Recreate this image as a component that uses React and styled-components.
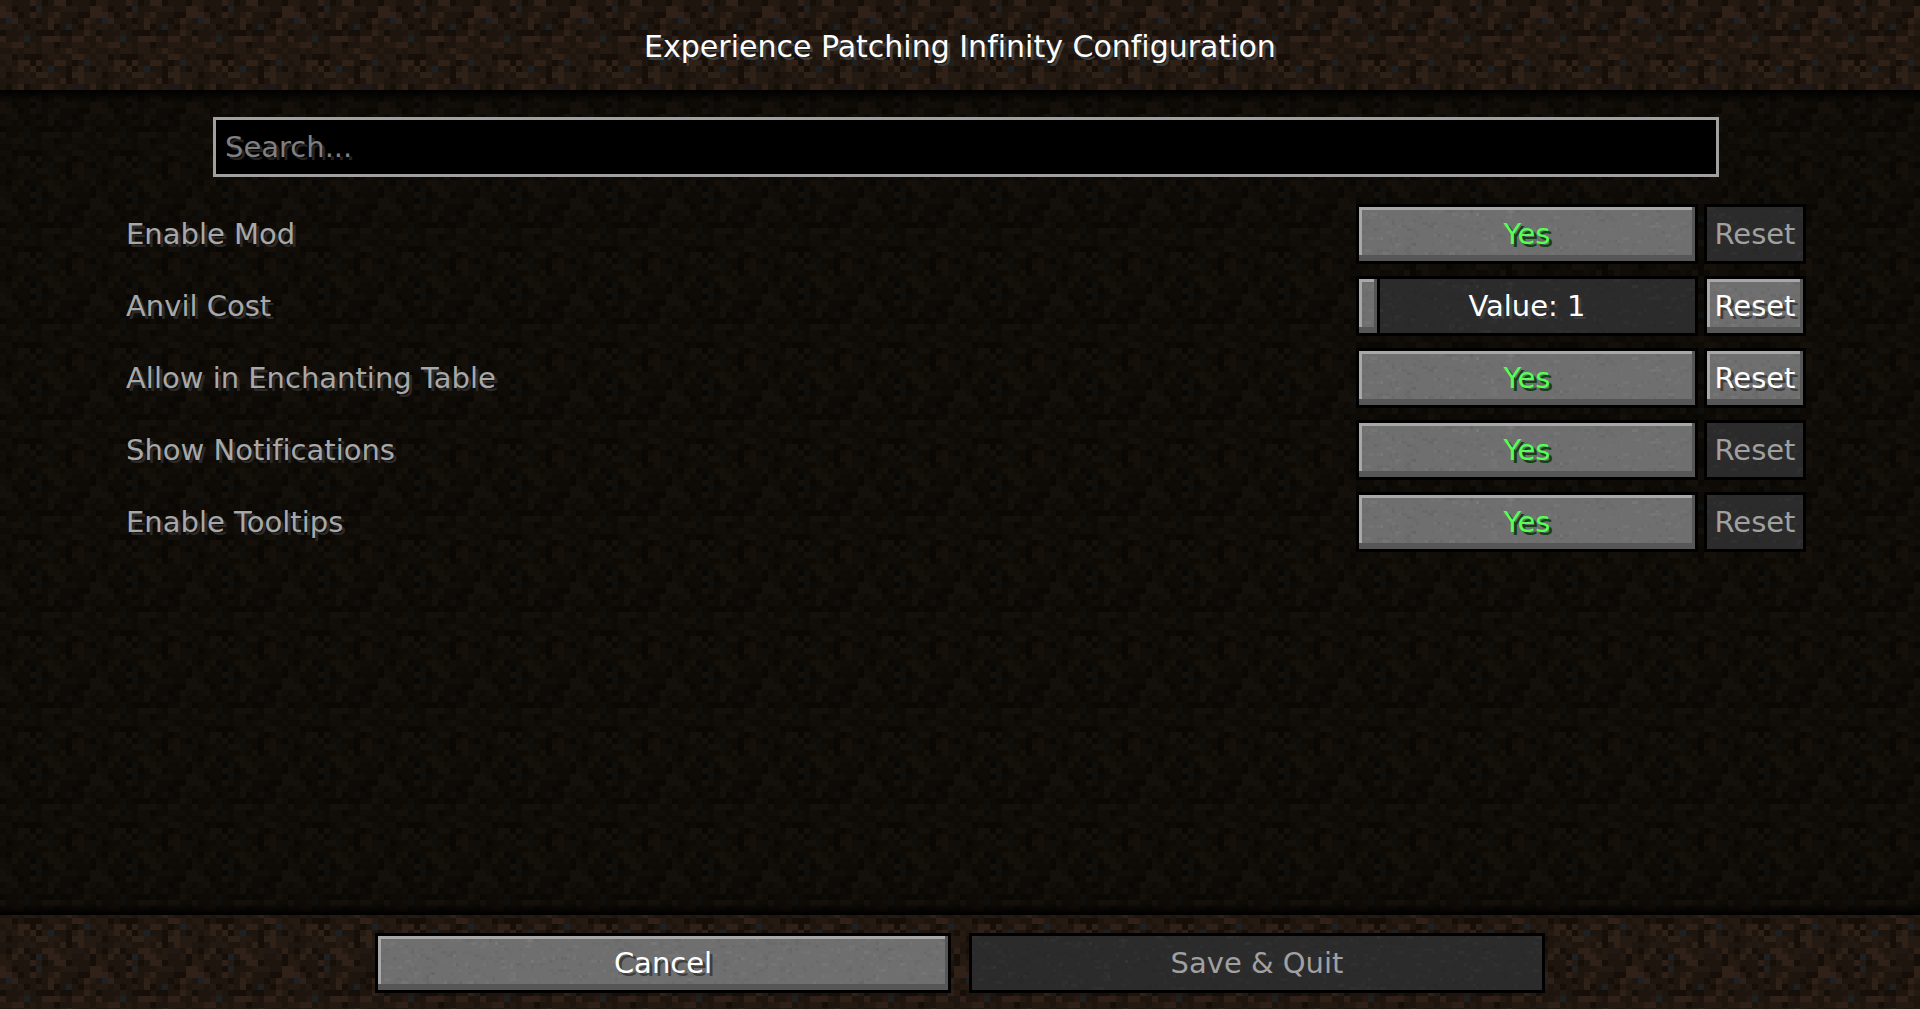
import React, { useState } from "react";
import styled, { createGlobalStyle, css } from "styled-components";

/* ---------- textures ---------- */

const DIRT = [
  "2211132013301110",
  "320110g111222113",
  "3320132123111003",
  "1g31110132110132",
  "22120121301g1021",
  "0111210001001132",
  "3112g11333213311",
  "2233121220112221",
  "1121221221232112",
  "2201000122113321",
  "12133031133101g2",
  "21231302g1102310",
  "2011213322103322",
  "1112b21121301322",
  "102301133212bb13",
  "213120g133221120",
];

const DIRT_COLORS = {
  0: "#160e09",
  1: "#1e150f",
  2: "#251a12",
  3: "#2f2118",
  g: "#1e2123",
  b: "#1f1814",
};

const svgUrl = (width, height, body) =>
  `url("data:image/svg+xml,${encodeURIComponent(
    `<svg xmlns="http://www.w3.org/2000/svg" width="${width}" height="${height}" shape-rendering="crispEdges">${body}</svg>`
  )}")`;

const dirtTexture = svgUrl(
  96,
  96,
  DIRT.map((row, y) =>
    [...row]
      .map(
        (c, x) =>
          `<rect x="${x * 6}" y="${y * 6}" width="6" height="6" fill="${DIRT_COLORS[c]}"/>`
      )
      .join("")
  ).join("")
);

const makeStone = (strength) => {
  let seed = 90210;
  const next = () => {
    seed = (seed * 16807) % 2147483647;
    return seed / 2147483647;
  };
  let body = "";
  for (let i = 0; i < 700; i += 1) {
    const x = Math.floor(next() * 192) * 3;
    const y = Math.floor(next() * 18) * 3;
    const wide = next() > 0.6 ? 6 : 3;
    const fill = next() > 0.5 ? "#fff" : "#000";
    const alpha = ((0.2 + next() * 0.8) * strength).toFixed(3);
    body += `<rect x="${x}" y="${y}" width="${wide}" height="3" fill="${fill}" fill-opacity="${alpha}"/>`;
  }
  return svgUrl(576, 54, body);
};

const stoneTexture = makeStone(0.05);
const darkStoneTexture = makeStone(0.03);

/* ---------- styles ---------- */

const GlobalStyle = createGlobalStyle`
  *, *::before, *::after { box-sizing: border-box; }
  body {
    margin: 0;
    background: #1e150f;
    font-family: "DejaVu Sans", "Noto Sans", sans-serif;
    font-size: 29px;
    line-height: 36px;
    font-variant-ligatures: none;
  }
`;

const Screen = styled.form`
  display: flex;
  flex-direction: column;
  min-height: 100vh;
  background: ${dirtTexture};
`;

const Header = styled.header`
  display: flex;
  justify-content: center;
  padding: 29px 24px 25px;
`;

const Title = styled.h1`
  margin: 0;
  font-size: 30px;
  font-weight: 400;
  line-height: 36px;
  color: #fff;
  text-shadow: 3px 3px 0 #3e3e3e;
`;

const Content = styled.main`
  flex: 1;
  display: flex;
  flex-direction: column;
  gap: 27px;
  padding: 27px 114px 27px 126px;
  background: linear-gradient(#000, transparent) top / 100% 12px no-repeat,
    linear-gradient(transparent, #000) bottom / 100% 12px no-repeat,
    rgba(2, 3, 0, 0.55);
`;

const SearchBox = styled.input`
  height: 60px;
  margin: 0 87px;
  padding: 0 9px;
  border: 3px solid #a0a0a0;
  border-radius: 0;
  outline: 0;
  background: #000;
  color: #e0e0e0;
  font: inherit;
  text-shadow: 3px 3px 0 #242424;

  &::placeholder {
    color: #808080;
    opacity: 1;
  }
`;

const OptionList = styled.div`
  display: flex;
  flex-direction: column;
  gap: 12px;
`;

const OptionRow = styled.div`
  display: grid;
  grid-template-columns: 1fr 342px 102px;
  column-gap: 6px;
  height: 60px;
`;

const OptionLabel = styled.label`
  align-self: center;
  justify-self: start;
  color: #a8a8a8;
  text-shadow: 3px 3px 0 #2a2a2a;
`;

const raised = css`
  background: ${stoneTexture} #6f6f6f;
  box-shadow: inset 0 -6px #565656, inset -3px 0 #565656, inset 3px 3px #a8a8a8;
`;

const Button = styled.button`
  height: 60px;
  padding: 0;
  border: 3px solid #000;
  border-radius: 0;
  font: inherit;
  color: ${({ $on }) => ($on ? "#55ff55" : "#fff")};
  text-shadow: 3px 3px 0 ${({ $on }) => ($on ? "#153f15" : "#3e3e3e")};
  ${raised}

  &:disabled {
    background: ${darkStoneTexture} #2b2b2b;
    box-shadow: none;
    color: #a0a0a0;
    text-shadow: none;
  }
`;

const Slider = styled.div`
  display: grid;

  > * {
    grid-area: 1 / 1;
  }
`;

const thumb = css`
  appearance: none;
  width: 21px;
  height: 54px;
  border: 0;
  border-right: 3px solid #000;
  border-radius: 0;
  ${raised}
`;

const SliderInput = styled.input`
  appearance: none;
  width: 100%;
  height: 60px;
  margin: 0;
  border: 3px solid #000;
  background: ${darkStoneTexture} #2b2b2b;

  &::-webkit-slider-thumb {
    ${thumb}
  }

  &::-moz-range-thumb {
    ${thumb}
  }
`;

const SliderValue = styled.output`
  place-self: center;
  pointer-events: none;
  color: #fff;
  text-shadow: 3px 3px 0 #3e3e3e;
`;

const Footer = styled.footer`
  display: grid;
  grid-template-columns: repeat(2, minmax(0, 576px));
  justify-content: center;
  gap: 18px;
  padding: 18px 24px 16px;
`;

/* ---------- screen ---------- */

const OPTIONS = [
  { id: "enable-mod", label: "Enable Mod", value: true, initial: true },
  { id: "anvil-cost", label: "Anvil Cost", value: 1, initial: 5, min: 1, max: 50 },
  { id: "enchanting-table", label: "Allow in Enchanting Table", value: true, initial: false },
  { id: "notifications", label: "Show Notifications", value: true, initial: true },
  { id: "tooltips", label: "Enable Tooltips", value: true, initial: true },
];

function Option({ option, value, onChange }) {
  const { id, label, initial, min, max } = option;
  return (
    <OptionRow>
      <OptionLabel htmlFor={id}>{label}</OptionLabel>
      {typeof initial === "number" ? (
        <Slider>
          <SliderInput
            id={id}
            type="range"
            min={min}
            max={max}
            value={value}
            onChange={(e) => onChange(Number(e.target.value))}
          />
          <SliderValue htmlFor={id}>Value: {value}</SliderValue>
        </Slider>
      ) : (
        <Button id={id} type="button" $on={value} onClick={() => onChange(!value)}>
          {value ? "Yes" : "No"}
        </Button>
      )}
      <Button type="button" disabled={value === initial} onClick={() => onChange(initial)}>
        Reset
      </Button>
    </OptionRow>
  );
}

const startValues = Object.fromEntries(OPTIONS.map((o) => [o.id, o.value]));

export default function App() {
  const [values, setValues] = useState(startValues);
  const [query, setQuery] = useState("");
  const changed = OPTIONS.some((o) => values[o.id] !== o.value);
  const visible = OPTIONS.filter((o) =>
    o.label.toLowerCase().includes(query.toLowerCase())
  );

  return (
    <Screen onSubmit={(e) => e.preventDefault()}>
      <GlobalStyle />
      <Header>
        <Title>Experience Patching Infinity Configuration</Title>
      </Header>
      <Content>
        <SearchBox
          type="text"
          aria-label="Search"
          placeholder="Search..."
          value={query}
          onChange={(e) => setQuery(e.target.value)}
        />
        <OptionList>
          {visible.map((o) => (
            <Option
              key={o.id}
              option={o}
              value={values[o.id]}
              onChange={(v) => setValues({ ...values, [o.id]: v })}
            />
          ))}
        </OptionList>
      </Content>
      <Footer>
        <Button type="button" onClick={() => setValues(startValues)}>
          Cancel
        </Button>
        <Button type="submit" disabled={!changed}>
          Save &amp; Quit
        </Button>
      </Footer>
    </Screen>
  );
}
